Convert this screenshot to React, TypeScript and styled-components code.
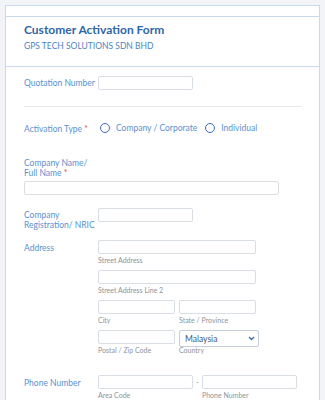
import styled, { createGlobalStyle } from 'styled-components';

const GlobalStyle = createGlobalStyle`
  html, body {
    margin: 0;
    padding: 0;
    background: #f3f4f8;
  }
  body {
    padding: 5px 5px 0;
    font-family: Lato, "Open Sans", sans-serif;
  }
`;

export default function App() {
    return (
        <>
            <GlobalStyle />
            <Card>
                <TopBand />
                <Header>
                    <Title>Customer Activation Form</Title>
                    <Subtitle>GPS TECH SOLUTIONS SDN BHD</Subtitle>
                </Header>
                <Body>
                    <Row gap={9}>
                        <Label>Quotation Number</Label>
                        <Input width={95} />
                    </Row>
                    <Divider />
                    <Row gap={15} center>
                        <Label>Activation Type <Req>*</Req></Label>
                        <Radios>
                            <Radio />
                            <RadioText>Company / Corporate</RadioText>
                            <Radio />
                            <RadioText>Individual</RadioText>
                        </Radios>
                    </Row>
                    <Stack gap={22}>
                        <Label>Company Name/<br />Full Name <Req>*</Req></Label>
                        <Input width={255} />
                    </Stack>
                    <Row gap={13}>
                        <Label>Company<br />Registration/ NRIC</Label>
                        <Input width={95} />
                    </Row>
                    <Row gap={10}>
                        <Label top={3}>Address</Label>
                        <Fields>
                            <Field wide>
                                <Input width={158} />
                                <SubLabel>Street Address</SubLabel>
                            </Field>
                            <Field wide>
                                <Input width={158} />
                                <SubLabel>Street Address Line 2</SubLabel>
                            </Field>
                            <Field>
                                <Input width={77} />
                                <SubLabel>City</SubLabel>
                            </Field>
                            <Field>
                                <Input width={77} />
                                <SubLabel>State / Province</SubLabel>
                            </Field>
                            <Field>
                                <Input width={77} />
                                <SubLabel>Postal / Zip Code</SubLabel>
                            </Field>
                            <Field>
                                <Select>
                                    <span>Malaysia</span>
                                    <svg width="7" height="5" viewBox="0 0 7 5">
                                        <path d="M1 1l2.5 2.5L6 1" fill="none" stroke="#3d6db3" strokeWidth="1.4" />
                                    </svg>
                                </Select>
                                <SubLabel>Country</SubLabel>
                            </Field>
                        </Fields>
                    </Row>
                    <Row gap={20}>
                        <Label top={3}>Phone Number</Label>
                        <Phone>
                            <Field>
                                <Input width={95} />
                                <SubLabel>Area Code</SubLabel>
                            </Field>
                            <Dash>-</Dash>
                            <Field>
                                <Input width={95} />
                                <SubLabel>Phone Number</SubLabel>
                            </Field>
                        </Phone>
                    </Row>
                </Body>
            </Card>
        </>
    );
}

const Card = styled.div`
    background: #fff;
    border: 1px solid #c9d9ee;
    border-bottom: 0;
    height: 420px;
`;

const TopBand = styled.div`
    height: 10px;
    border-bottom: 1px solid #c9d9ee;
`;

const Header = styled.div`
    padding: 5px 18px 14px;
    border-bottom: 1px solid #c9d9ee;
`;

const Title = styled.div`
    font-size: 12px;
    line-height: 16px;
    font-weight: 700;
    color: #2f66a8;
`;

const Subtitle = styled.div`
    margin-top: 2px;
    font-size: 8.5px;
    line-height: 12px;
    color: #4d84c4;
`;

const Body = styled.div`
    padding: 0 18px;
`;

const Row = styled.div<{ gap: number; center?: boolean }>`
    display: grid;
    grid-template-columns: 74px 1fr;
    align-items: ${(p) => (p.center ? 'center' : 'start')};
    margin-top: ${(p) => p.gap}px;
`;

const Stack = styled.div<{ gap: number }>`
    display: flex;
    flex-direction: column;
    gap: 3px;
    margin-top: ${(p) => p.gap}px;
`;

const Label = styled.div<{ top?: number }>`
    font-size: 8.5px;
    line-height: 10px;
    color: #5b91d0;
    padding-top: ${(p) => p.top ?? 2}px;
`;

const Req = styled.span`
    color: #e2463f;
`;

const Input = styled.div<{ width: number }>`
    box-sizing: border-box;
    width: ${(p) => p.width}px;
    height: 14px;
    border: 1px solid #d9dee5;
    border-radius: 2px;
    background: #fff;
`;

const Divider = styled.div`
    margin-top: 16px;
    height: 1px;
    background: #e3e8ef;
    width: 277px;
`;

const Radios = styled.div`
    display: flex;
    align-items: center;
`;

const Radio = styled.div`
    box-sizing: border-box;
    width: 10px;
    height: 10px;
    border-radius: 50%;
    border: 1.5px solid #3d6db3;
    margin: 0 6px 0 2px;
`;

const RadioText = styled.span`
    font-size: 8.5px;
    color: #5b91d0;
    margin-right: 6px;
`;

const Fields = styled.div`
    display: grid;
    grid-template-columns: 77px 77px;
    column-gap: 4px;
    row-gap: 5px;
`;

const Field = styled.div<{ wide?: boolean }>`
    display: flex;
    flex-direction: column;
    grid-column: ${(p) => (p.wide ? 'span 2' : 'auto')};
`;

const SubLabel = styled.div`
    font-size: 7px;
    line-height: 9px;
    margin-top: 2px;
    color: #8e939a;
`;

const Select = styled.div`
    box-sizing: border-box;
    width: 80px;
    height: 17px;
    border: 1px solid #c4cfdd;
    border-radius: 2px;
    display: flex;
    align-items: center;
    justify-content: space-between;
    padding: 0 3px 0 5px;
    font-size: 8.5px;
    color: #3c5a80;
    margin-bottom: -3px;
`;

const Phone = styled.div`
    display: flex;
    align-items: flex-start;
`;

const Dash = styled.span`
    width: 9px;
    text-align: center;
    font-size: 8px;
    line-height: 14px;
    color: #8a8f96;
`;
